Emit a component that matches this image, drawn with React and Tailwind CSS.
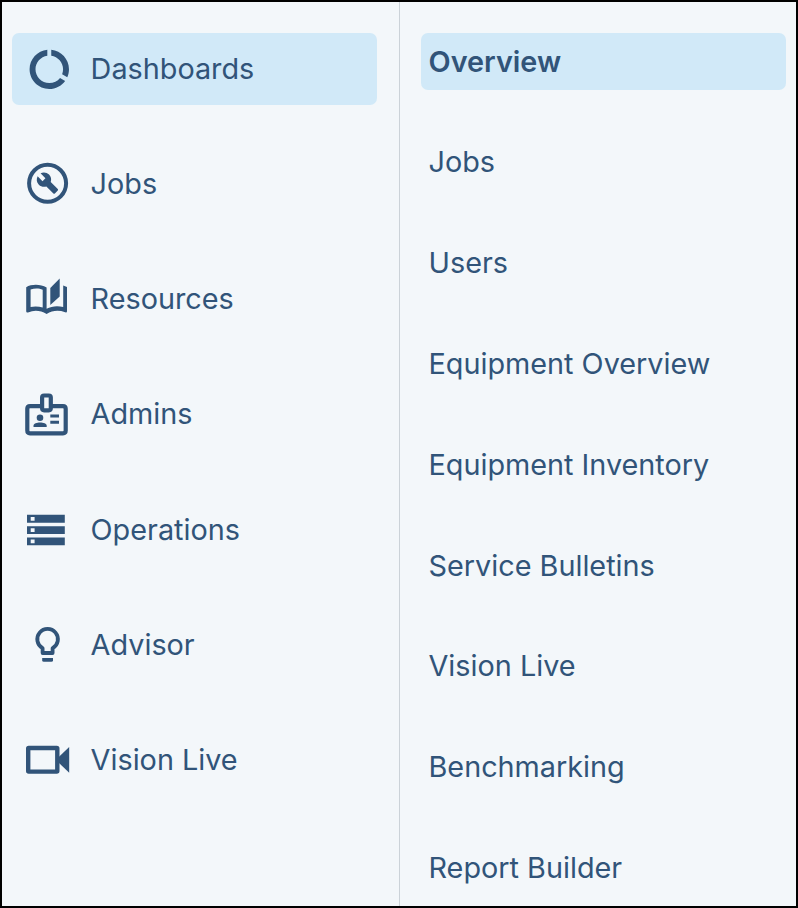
const DashboardIcon = () => (
  <svg viewBox="24 45 48 48" className="size-12 shrink-0" fill="currentColor">
    <path transform="translate(25.65 45.65) scale(1.97)" d="M13 2.05v3.03c3.39.49 6 3.39 6 6.92 0 .9-.18 1.75-.48 2.54l2.6 1.53c.56-1.24.88-2.62.88-4.07 0-5.18-3.95-9.45-9-9.95zM12 19c-3.87 0-7-3.13-7-7 0-3.53 2.61-6.43 6-6.92V2.05c-5.06.5-9 4.76-9 9.95 0 5.52 4.47 10 9.99 10 3.31 0 6.24-1.61 8.06-4.09l-2.6-1.53C16.17 17.98 14.21 19 12 19z" />
  </svg>
);

const JobsIcon = () => (
  <svg viewBox="24 160.2 48 48" className="size-12 shrink-0" fill="currentColor">
    <circle cx="47.6" cy="183.5" r="18.5" fill="none" stroke="currentColor" strokeWidth="4" />
    <path transform="translate(22.8 158.7) scale(2.07)" d="M13.49 11.38c.43-1.22.17-2.64-.81-3.62-1.11-1.11-2.79-1.3-4.1-.59l2.35 2.35-1.41 1.41-2.35-2.35c-.71 1.32-.52 2.99.59 4.1.98.98 2.4 1.24 3.62.81l3.41 3.41c.2.2.51.2.71 0l1.4-1.4c.2-.2.2-.51 0-.71l-3.41-3.41z" />
  </svg>
);

const ResourcesIcon = () => (
  <svg viewBox="24 275.4 48 48" className="size-12 shrink-0" fill="currentColor">
    <path fillRule="evenodd" d="M26.2 287.6C31.5 284.4 40.5 284.3 46.6 288V309.2C51.5 306.6 57.5 305.9 63.2 307.5V286L67 287.4V311.6Q67 313.2 65.2 312.7C58.5 310.3 52.5 310.8 46.6 314.5C40.5 310.8 34.5 310.3 28 312.8Q26.2 313.2 26.2 311.6ZM30.6 290V307.5C34.5 306.4 39 306.8 42.7 308V290.2C39 288.4 34.5 288.4 30.6 290Z" />
    <path d="M50.3 288.3L59.7 279V296.8L50.3 305.3Z" />
  </svg>
);

const AdminsIcon = () => (
  <svg viewBox="24 390.6 48 48" className="size-12 shrink-0" fill="currentColor">
    <g fill="none" stroke="currentColor" strokeWidth="4.2">
      <path d="M42 405.7H30Q27.3 405.7 27.3 408.4V430.2Q27.3 432.9 30 432.9H63Q65.7 432.9 65.7 430.2V408.4Q65.7 405.7 63 405.7H51" />
      <rect x="42.1" y="395.1" width="8.7" height="14.8" rx="2" />
    </g>
    <circle cx="40" cy="417.4" r="3.3" />
    <path d="M33.5 426.7V425.3C33.5 421 46.7 421 46.7 425.3V426.7Z" />
    <path d="M50.3 414H59V417H50.3ZM50.3 420.4H59V423.4H50.3Z" />
  </svg>
);

const OperationsIcon = () => (
  <svg viewBox="24 505.8 48 48" className="size-12 shrink-0" fill="currentColor">
    <path fillRule="evenodd" d="M27 514.5H64.8V522.6H27ZM30.7 516.7V520.5H34.6V516.7ZM27 526H64.8V533.7H27ZM30.7 528V531.9H34.6V528ZM27 537.3H64.8V545H27ZM30.7 539.3V543.1H34.6V539.3Z" />
  </svg>
);

const AdvisorIcon = () => (
  <svg viewBox="24 621 48 48" className="size-12 shrink-0" fill="currentColor">
    <path fill="none" stroke="currentColor" strokeWidth="3.8" strokeLinejoin="round" d="M42.6 653V648.2A10.3 10.3 0 1 1 52.6 648.2V653Z" />
    <path d="M42.2 658H53V660.2Q53 661.8 51.4 661.8H43.8Q42.2 661.8 42.2 660.2Z" />
  </svg>
);

const VideoIcon = () => (
  <svg viewBox="24 736.2 48 48" className="size-12 shrink-0" fill="currentColor">
    <rect x="28.2" y="748.2" width="29.1" height="23.6" rx="0.5" fill="none" stroke="currentColor" strokeWidth="4.4" strokeLinejoin="round" />
    <path d="M59 757L69.2 747.3V773L59 763.2Z" />
  </svg>
);

const sections = [
  { label: "Dashboards", Icon: DashboardIcon, active: true },
  { label: "Jobs", Icon: JobsIcon },
  { label: "Resources", Icon: ResourcesIcon },
  { label: "Admins", Icon: AdminsIcon },
  { label: "Operations", Icon: OperationsIcon },
  { label: "Advisor", Icon: AdvisorIcon },
  { label: "Vision Live", Icon: VideoIcon },
];

const pages = [
  "Overview",
  "Jobs",
  "Users",
  "Equipment Overview",
  "Equipment Inventory",
  "Service Bulletins",
  "Vision Live",
  "Benchmarking",
  "Report Builder",
];

export default function App() {
  return (
    <div className="flex h-[908px] w-[798px] overflow-hidden border-2 border-black bg-[#f3f7fa] font-['Inter',sans-serif] text-[28.8px] leading-none text-[#315479]">
      <nav className="flex w-[398px] shrink-0 flex-col gap-[43.2px] border-r border-[#cbd2d8] pt-[31px] pr-[22px] pl-[10px]">
        {sections.map(({ label, Icon, active }) => (
          <a key={label} className={`flex h-[72px] shrink-0 items-center gap-[18.6px] rounded-[7px] pl-3 ${active ? "bg-[#d1e9f8]" : ""}`}>
            <Icon />
            <span className="pt-[0.6px]">{label}</span>
          </a>
        ))}
      </nav>
      <nav className="flex flex-1 flex-col gap-[43.8px] pt-[31px] pr-[10px] pl-[21px]">
        {pages.map((label, i) => (
          <a key={label} className={`flex h-[57px] shrink-0 items-center rounded-[7px] pt-px pl-[7.5px] ${i === 0 ? "bg-[#d1e9f8] font-semibold" : ""}`}>
            {label}
          </a>
        ))}
      </nav>
    </div>
  );
}
